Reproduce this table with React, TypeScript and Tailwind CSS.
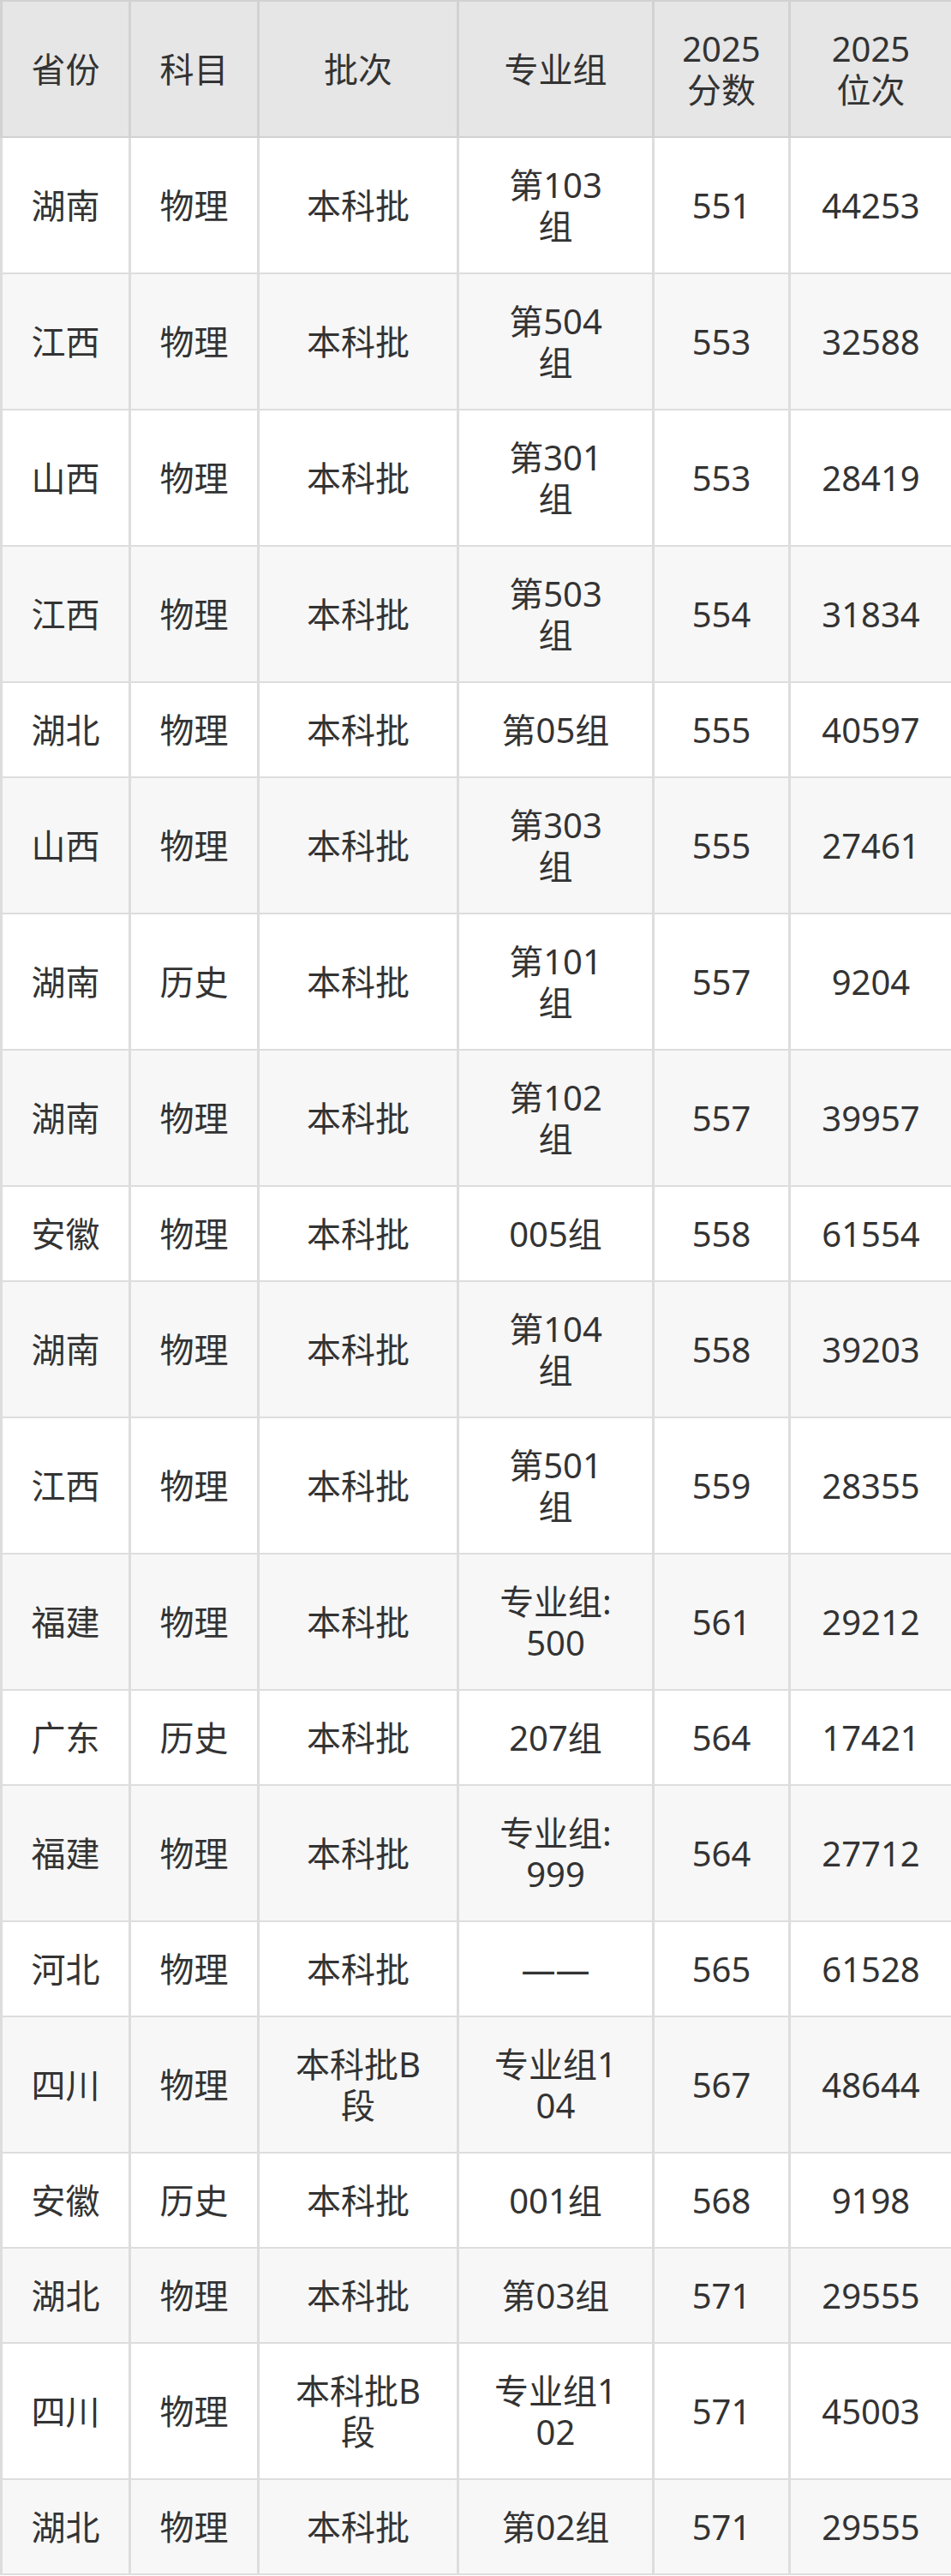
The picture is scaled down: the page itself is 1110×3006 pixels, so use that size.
const headers = ["省份", "科目", "批次", "专业组", "2025分数", "2025位次"];

const rows: string[][] = [
  ["湖南", "物理", "本科批", "第103组", "551", "44253"],
  ["江西", "物理", "本科批", "第504组", "553", "32588"],
  ["山西", "物理", "本科批", "第301组", "553", "28419"],
  ["江西", "物理", "本科批", "第503组", "554", "31834"],
  ["湖北", "物理", "本科批", "第05组", "555", "40597"],
  ["山西", "物理", "本科批", "第303组", "555", "27461"],
  ["湖南", "历史", "本科批", "第101组", "557", "9204"],
  ["湖南", "物理", "本科批", "第102组", "557", "39957"],
  ["安徽", "物理", "本科批", "005组", "558", "61554"],
  ["湖南", "物理", "本科批", "第104组", "558", "39203"],
  ["江西", "物理", "本科批", "第501组", "559", "28355"],
  ["福建", "物理", "本科批", "专业组:500", "561", "29212"],
  ["广东", "历史", "本科批", "207组", "564", "17421"],
  ["福建", "物理", "本科批", "专业组:999", "564", "27712"],
  ["河北", "物理", "本科批", "——", "565", "61528"],
  ["四川", "物理", "本科批B段", "专业组104", "567", "48644"],
  ["安徽", "历史", "本科批", "001组", "568", "9198"],
  ["湖北", "物理", "本科批", "第03组", "571", "29555"],
  ["四川", "物理", "本科批B段", "专业组102", "571", "45003"],
  ["湖北", "物理", "本科批", "第02组", "571", "29555"],
];

// side padding per column, tuned so the text wraps where the source wraps
const padX = ["px-[20px]", "px-[20px]", "px-[39.5px]", "px-[39.5px]", "px-[20px]", "px-[32px]"];

export default function App() {
  return (
    <div
      className="w-[1110px] bg-white text-[#333333]"
      style={{ fontFamily: '"Noto Sans", "Noto Sans CJK SC", sans-serif' }}
    >
      <table className="w-[1110px] table-fixed border-collapse text-center text-[40px] leading-[48px]">
        <colgroup>
          <col className="w-[150px]" />
          <col className="w-[150px]" />
          <col className="w-[233px]" />
          <col className="w-[228px]" />
          <col className="w-[159px]" />
          <col className="w-[190px]" />
        </colgroup>
        <thead>
          <tr className="bg-[#e6e6e6]">
            {headers.map((h, i) => (
              <th
                key={h}
                className={`border-x-[3px] border-y-[2px] border-[#d2d2d2] py-[30.5px] font-normal align-middle break-all ${padX[i]}`}
              >
                {h}
              </th>
            ))}
          </tr>
        </thead>
        <tbody>
          {rows.map((row, r) => (
            <tr key={r} className={r % 2 === 0 ? "bg-white" : "bg-[#f7f7f7]"}>
              {row.map((cell, i) => (
                <td
                  key={i}
                  className={`border-x-[3px] border-y-[2px] border-[#dddddd] py-[30.5px] align-middle break-all ${padX[i]}`}
                >
                  {cell}
                </td>
              ))}
            </tr>
          ))}
        </tbody>
      </table>
    </div>
  );
}
